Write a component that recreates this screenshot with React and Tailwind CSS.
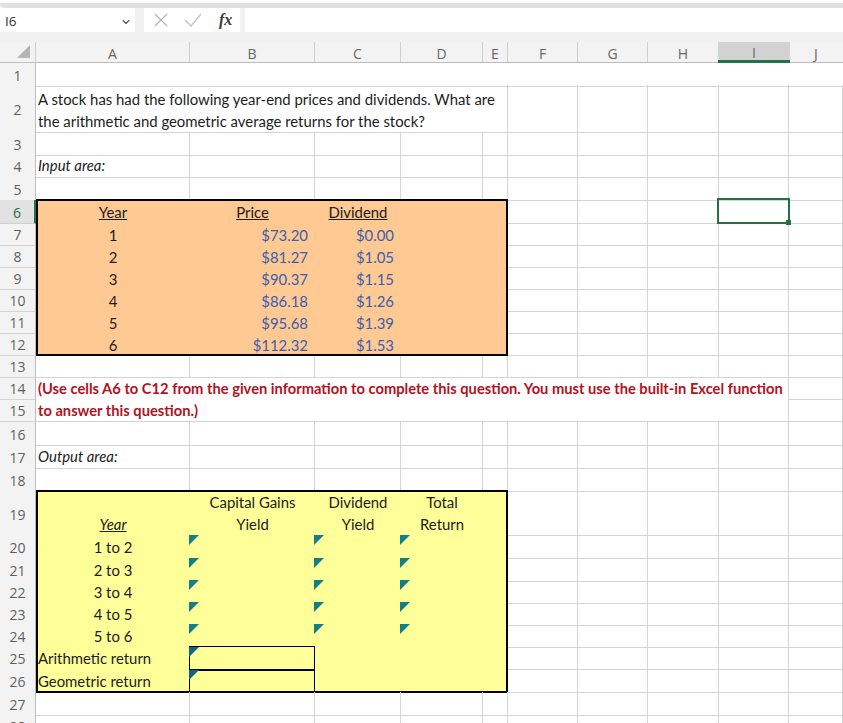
import { ChevronDown } from 'lucide-react';

const COLS = 'grid grid-cols-[36px_154px_125px_86px_82px_25px_70px_70px_71px_70px_54px]';
const LINE = 'border-r border-b border-[#d4d4d4]';
const TEXT = "font-['Lato',sans-serif] text-[14.9px] text-[#1c1c1c]";
const RED = "font-['Lato',sans-serif] text-[14.7px] font-bold text-[#b3121d]";
const EDGE = 'shadow-[inset_2px_0_0_#000,inset_-2px_0_0_#000]';
const EDGE_TOP = 'shadow-[inset_2px_0_0_#000,inset_-2px_0_0_#000,inset_0_1px_0_#000,0_-1px_0_#000]';
const EDGE_BOTTOM = 'shadow-[inset_2px_0_0_#000,inset_-2px_0_0_#000,inset_0_-2px_0_#000]';

const PRICES = [
  ['1', '$73.20', '$0.00'],
  ['2', '$81.27', '$1.05'],
  ['3', '$90.37', '$1.15'],
  ['4', '$86.18', '$1.26'],
  ['5', '$95.68', '$1.39'],
  ['6', '$112.32', '$1.53'],
];
const SPANS = [
  ['1 to 2', 'h-[23px]'],
  ['2 to 3', 'h-[22px]'],
  ['3 to 4', 'h-[22px]'],
  ['4 to 5', 'h-[22px]'],
  ['5 to 6', 'h-[22px]'],
];
const HEADERS = [
  ['A', 'w-[154px]'],
  ['B', 'w-[125px]'],
  ['C', 'w-[86px]'],
  ['D', 'w-[82px]'],
  ['E', 'w-[25px]'],
  ['F', 'w-[70px]'],
  ['G', 'w-[70px]'],
  ['H', 'w-[71px]'],
];

const Flag = ({ dark }) => (
  <svg viewBox="0 0 10 10" className="absolute top-0 -left-[1px] w-[10px] h-[10px]">
    <polygon points="0,0 10,0 0,10" fill={dark ? '#0f6480' : '#127f85'} />
  </svg>
);

const Row = ({ n, height, active, children }) => (
  <div className={`${COLS} ${height}`}>
    <div
      className={`flex items-center justify-center ${n >= 7 && n <= 15 ? 'pt-0' : 'pt-[2px]'} font-['Open_Sans',sans-serif] text-[14px] border-b ${
        active
          ? 'bg-[#e1e1e1] text-[#217346] border-b-[#cfcfcf] border-r-2 border-r-[#217346]'
          : 'bg-[#f3f3f3] text-[#5f5f5f] border-b-[#d4d4d4] border-r border-r-[#bdbdbd]'
      }`}
    >
      {n}
    </div>
    {children}
  </div>
);

const Blank = () => <div className={LINE} />;
const BlankRest = () => (
  <>
    <Blank />
    <Blank />
    <Blank />
    <Blank />
    <Blank />
  </>
);

const Plain = ({ n, height, children }) => (
  <Row n={n} height={height}>
    <div className={`${LINE} flex items-end pl-[2px] pb-[1px] ${TEXT} leading-[21px] italic`}>{children}</div>
    <Blank />
    <Blank />
    <Blank />
    <Blank />
    <BlankRest />
  </Row>
);

const Toolbar = () => (
  <div className="h-[42px] bg-[#f1f1f1] flex flex-col">
    <div className="h-[3px] bg-white" />
    <div className="h-[5px] bg-[#e0e0e0] rounded-bl-md" />
    <div className="flex h-[24px]">
      <div className="w-[135px] bg-white flex items-center justify-between pt-[3px] pl-[5px] pr-[3px] font-['Open_Sans',sans-serif] text-[13.5px] text-[#333]">
        I6
        <ChevronDown size={12} strokeWidth={2.2} className="text-[#555]" />
      </div>
      <div className="ml-[9px] w-[96px] bg-white flex items-center">
        <svg viewBox="0 0 14 14" className="ml-[10px] w-[14px] h-[14px]">
          <path d="M1 1 L13 13 M13 1 L1 13" stroke="#b4b4b4" strokeWidth="1.2" fill="none" />
        </svg>
        <svg viewBox="0 0 18 14" className="ml-[16px] w-[18px] h-[14px]">
          <path d="M1 7 L7 13 L17 1" stroke="#c0c0c0" strokeWidth="1.2" fill="none" />
        </svg>
        <span className="ml-[17px] font-['Liberation_Serif',serif] italic font-bold text-[16px] leading-none text-[#3a3a3a]">
          fx
        </span>
      </div>
      <div className="ml-[5px] flex-1 bg-white" />
    </div>
  </div>
);

const ColumnHeader = () => (
  <div className={`${COLS} h-[21px] bg-[#f3f3f3] border-b border-b-[#bdbdbd] font-['Open_Sans',sans-serif] text-[14px] leading-none text-[#666]`}>
    <div className="relative border-r border-r-[#cfcfcf]">
      <svg viewBox="0 0 13 13" className="absolute top-[3px] left-[17px] w-[13px] h-[13px]">
        <polygon points="13,0 13,13 0,13" fill="#b4b4b4" />
      </svg>
    </div>
    {HEADERS.map(([label, width]) => (
      <div key={label} className={`${width} flex items-center justify-center pt-[3px] border-r border-r-[#cfcfcf]`}>
        {label}
      </div>
    ))}
    <div className="flex items-center justify-center pt-[3px] bg-[#d2d2d2] border-b-[3px] border-b-[#217346] -ml-[1px] -mb-[1px] -mr-[1px]">
      I
    </div>
    <div className="flex items-center justify-center pt-[3px]">J</div>
  </div>
);

const OrangeBox = () => (
  <>
    <Row n={6} height="h-[24px]" active>
      <div className={`col-span-5 bg-[#ffc993] ${EDGE_TOP} grid grid-cols-[154px_125px_86px_107px] items-end pb-[1px] ${TEXT} leading-[21px]`}>
        <span className="text-center underline">Year</span>
        <span className="text-center underline">Price</span>
        <span className="text-center underline">Dividend</span>
      </div>
      <Blank />
      <Blank />
      <Blank />
      <div className={`${LINE} relative`}>
        <div className="absolute -top-[2px] -left-[2px] -right-[2px] -bottom-[1px] border-2 border-[#217346]">
          <div className="absolute -right-[3px] -bottom-[3px] w-[5px] h-[5px] bg-[#217346]" />
        </div>
      </div>
      <Blank />
    </Row>
    {PRICES.map(([year, price, dividend], i) => (
      <Row key={year} n={i + 7} height="h-[22px]">
        <div className={`col-span-5 bg-[#ffc993] ${i === 5 ? EDGE_BOTTOM : EDGE} grid grid-cols-[154px_125px_86px_107px] items-end pb-[1px] ${TEXT} leading-[20px]`}>
          <span className="text-center">{year}</span>
          <span className="text-right pr-[7px] text-[#3a5fae]">{price}</span>
          <span className="text-right pr-[7px] text-[#3a5fae]">{dividend}</span>
        </div>
        <BlankRest />
      </Row>
    ))}
  </>
);

const YellowBox = () => (
  <>
    <Row n={19} height="h-[44px]">
      <div className={`col-span-5 bg-[#ffff99] ${EDGE_TOP} grid grid-cols-[154px_125px_86px_82px_25px] items-end pb-[1px] ${TEXT} leading-[22px]`}>
        <span className="text-center italic underline">Year</span>
        <span className="text-center">
          Capital Gains
          <br />
          Yield
        </span>
        <span className="text-center">
          Dividend
          <br />
          Yield
        </span>
        <span className="text-center">
          Total
          <br />
          Return
        </span>
      </div>
      <BlankRest />
    </Row>
    {SPANS.map(([label, height], i) => (
      <Row key={label} n={i + 20} height={height}>
        <div className={`col-span-5 bg-[#ffff99] ${EDGE} grid grid-cols-[154px_125px_86px_82px_25px] ${TEXT} leading-[20px]`}>
          <span className="self-end text-center pb-[2px]">{label}</span>
          <div className="relative h-full">
            <Flag />
          </div>
          <div className="relative h-full">
            <Flag />
          </div>
          <div className="relative h-full">
            <Flag />
          </div>
        </div>
        <BlankRest />
      </Row>
    ))}
    {['Arithmetic return', 'Geometric return'].map((label, i) => (
      <Row key={label} n={i + 25} height="h-[23px]">
        <div className={`col-span-5 bg-[#ffff99] ${i === 1 ? EDGE_BOTTOM : EDGE} grid grid-cols-[154px_125px_193px] ${TEXT} leading-[21px]`}>
          <span className="self-end pl-[2px] pb-[1px]">{label}</span>
          <div className={`relative -ml-[1px] border border-black ${i === 1 ? 'mb-[1px]' : '-mb-[1px]'}`}>
            <Flag dark />
          </div>
        </div>
        <BlankRest />
      </Row>
    ))}
  </>
);

export default function App() {
  return (
    <div className="h-[723px] w-[843px] overflow-hidden bg-white">
      <Toolbar />
      <ColumnHeader />
      <Row n={1} height="h-[22px]">
        <div className="col-span-10 border-b border-[#d4d4d4]" />
      </Row>
      <Row n={2} height="h-[47px]">
        <div className={`col-span-5 ${LINE} flex items-center pt-[3px] pl-[2px] ${TEXT} leading-[22px] whitespace-nowrap`}>
          <p>
            A stock has had the following year-end prices and dividends. What are
            <br />
            the arithmetic and geometric average returns for the stock?
          </p>
        </div>
        <BlankRest />
      </Row>
      <Plain n={3} height="h-[22px]" />
      <Plain n={4} height="h-[23px]">
        Input area:
      </Plain>
      <Plain n={5} height="h-[23px]" />
      <OrangeBox />
      <Plain n={13} height="h-[22px]" />
      <Row n={14} height="h-[22px]">
        <div className={`col-span-9 border-r border-[#d4d4d4] flex items-end pl-[2px] pb-[2px] ${RED} leading-[19px] whitespace-nowrap`}>
          (Use cells A6 to C12 from the given information to complete this question. You must use the built-in Excel function
        </div>
        <Blank />
      </Row>
      <Row n={15} height="h-[22px]">
        <div className={`col-span-9 ${LINE} flex items-end pl-[2px] pb-[1px] ${RED} leading-[19px]`}>
          to answer this question.)
        </div>
        <Blank />
      </Row>
      <Plain n={16} height="h-[23px]" />
      <Plain n={17} height="h-[23px]">
        Output area:
      </Plain>
      <Plain n={18} height="h-[23px]" />
      <YellowBox />
      <Plain n={27} height="h-[22px]" />
      <Plain n={28} height="h-[22px]" />
    </div>
  );
}
